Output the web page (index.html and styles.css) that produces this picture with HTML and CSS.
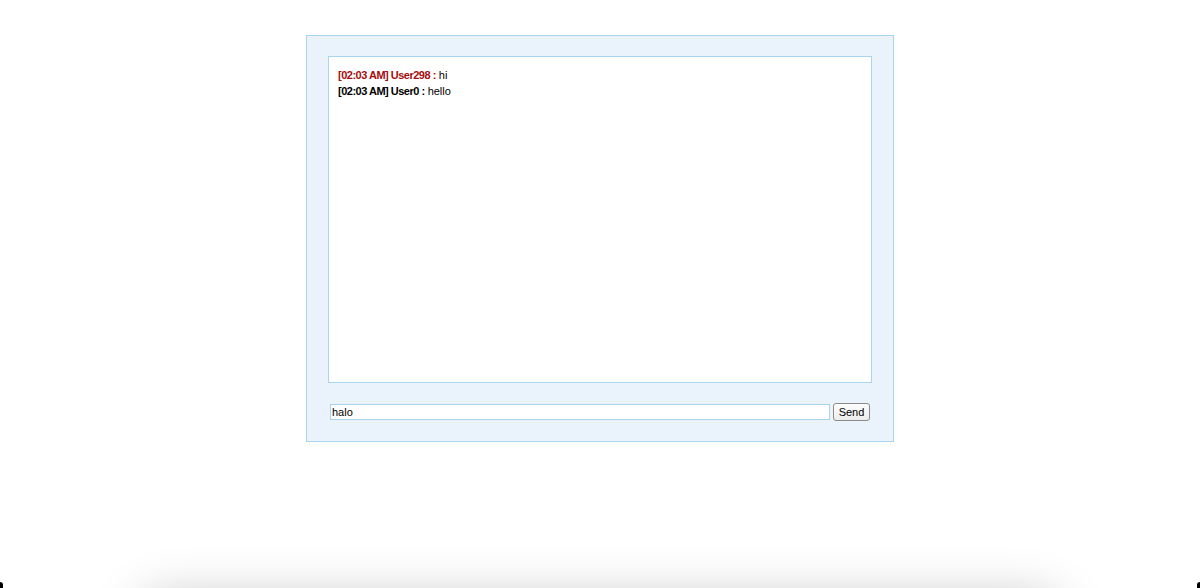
FILE: index.html
```html
<!DOCTYPE html>
<html>
<head>
<meta charset="utf-8">
<link rel="stylesheet" href="styles.css">
</head>
<body>
<div class="chat">
  <div class="log">
    <div class="msg other"><span class="who">[02:03 AM] User298 :</span> hi</div>
    <div class="msg self"><span class="who">[02:03 AM] User0 :</span> hello</div>
  </div>
  <form class="bar">
    <input class="text" type="text" value="halo">
    <button class="send" type="button">Send</button>
  </form>
</div>
<div class="shade"><div class="shadow"></div></div>
<div class="corner left"></div>
<div class="corner right"></div>
</body>
</html>
```
FILE: styles.css
```css
html, body {
  margin: 0;
  padding: 0;
  background: #fff;
  height: 588px;
  overflow: hidden;
}
body {
  font-family: "Liberation Sans", Arial, sans-serif;
  font-size: 11px;
  position: relative;
}
.chat {
  box-sizing: border-box;
  width: 588px;
  margin: 35px 0 0 306px;
  padding: 20px 21px 20px 21px;
  background: #eaf3fb;
  border: 1px solid #a9d4ee;
}
.log {
  box-sizing: border-box;
  height: 327px;
  background: #fff;
  border: 1px solid #a9d4ee;
  padding: 10px 9px;
}
.msg {
  line-height: 16px;
  color: #000;
}
.who { font-weight: bold; letter-spacing: -0.5px; }
.other .who { color: #a50d0d; }
.bar {
  display: flex;
  align-items: center;
  gap: 3px;
  margin: 19px 0 0 2px;
  height: 19px;
}
.text {
  box-sizing: border-box;
  width: 500px;
  height: 16px;
  margin: 0;
  padding: 0 1px;
  border: 1px solid #a9d4ee;
  font-family: "Liberation Sans", Arial, sans-serif;
  font-size: 11px;
  outline: none;
}
.send {
  box-sizing: border-box;
  width: 37px;
  height: 18px;
  margin: 0;
  padding: 0;
  border: 1px solid #8a8a8a;
  border-radius: 3px;
  background: linear-gradient(#fdfdfd, #ececec);
  font-family: "Liberation Sans", Arial, sans-serif;
  font-size: 11px;
  color: #000;
}
.shade {
  position: absolute;
  left: 0;
  right: 0;
  bottom: 0;
  height: 60px;
  overflow: hidden;
}
.shadow {
  position: absolute;
  left: 150px;
  width: 900px;
  top: 82px;
  height: 40px;
  border-radius: 20px;
  box-shadow: 0 0 50px 14px rgba(0,0,0,0.22);
}
.corner {
  position: absolute;
  bottom: 0;
  width: 3px;
  height: 6px;
  background: #000;
}
.corner.left { left: 0; border-top-right-radius: 3px; }
.corner.right { right: 0; border-top-left-radius: 3px; }
```
